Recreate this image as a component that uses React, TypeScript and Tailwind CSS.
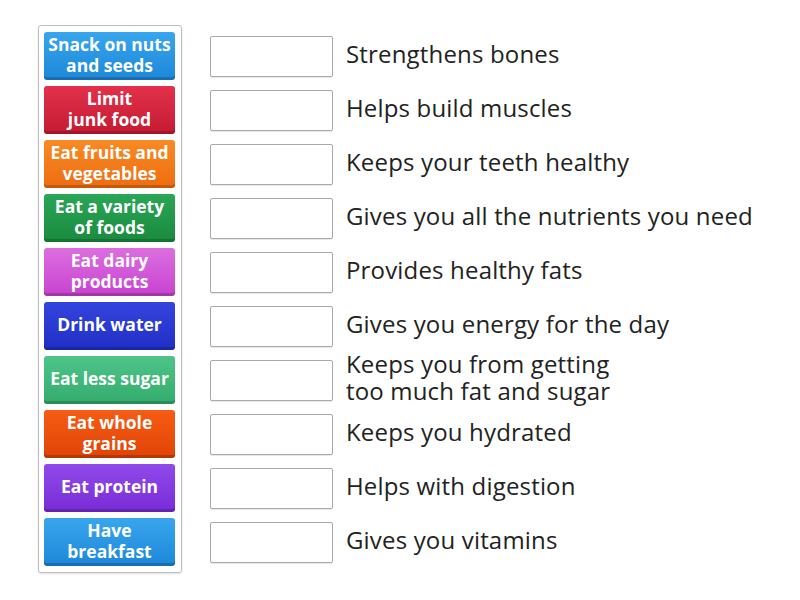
import React from "react";

const items: { label: string[]; cls: string }[] = [
  { label: ["Snack on nuts", "and seeds"], cls: "from-[#38a6ee] to-[#1c87d8]" },
  { label: ["Limit", "junk food"], cls: "from-[#e3304b] to-[#c51a32]" },
  { label: ["Eat fruits and", "vegetables"], cls: "from-[#f88a24] to-[#ee6c0e]" },
  { label: ["Eat a variety", "of foods"], cls: "from-[#2aa656] to-[#198a3e]" },
  { label: ["Eat dairy", "products"], cls: "from-[#dc6ee0] to-[#c741cf]" },
  { label: ["Drink water"], cls: "from-[#3444de] to-[#1f2fc6]" },
  { label: ["Eat less sugar"], cls: "from-[#4ec588] to-[#33ac6e]" },
  { label: ["Eat whole", "grains"], cls: "from-[#f75c14] to-[#e04306]" },
  { label: ["Eat protein"], cls: "from-[#9249ea] to-[#772bd6]" },
  { label: ["Have", "breakfast"], cls: "from-[#38a6ee] to-[#1c87d8]" },
];

const answers: string[][] = [
  ["Strengthens bones"],
  ["Helps build muscles"],
  ["Keeps your teeth healthy"],
  ["Gives you all the nutrients you need"],
  ["Provides healthy fats"],
  ["Gives you energy for the day"],
  ["Keeps you from getting", "too much fat and sugar"],
  ["Keeps you hydrated"],
  ["Helps with digestion"],
  ["Gives you vitamins"],
];

export default function App() {
  return (
    <div
      className="w-[800px] h-[600px] bg-white flex items-start pl-[38px] pt-[25px]"
      style={{ fontFamily: '"Open Sans", "Noto Sans", sans-serif' }}
    >
      <div className="border border-[#bdbdbd] rounded-[3px] pl-[5px] pr-[6px] pt-[6px] pb-[6px] flex flex-col gap-[6px] shadow-[0_1px_2px_rgba(0,0,0,0.12)]">
        {items.map((it, i) => (
          <div
            key={i}
            className={`w-[131px] h-[48px] rounded-[3px] bg-linear-to-b ${it.cls} shadow-[inset_0_-3px_0_rgba(0,0,0,0.18)] flex flex-col items-center justify-center text-white font-bold text-[17.5px] leading-[21px] pb-[3px]`}
          >
            {it.label.map((l, j) => (
              <span key={j} className="whitespace-nowrap">{l}</span>
            ))}
          </div>
        ))}
      </div>
      <div className="ml-[28px] pt-[7px] flex flex-col gap-[6px]">
        {answers.map((a, i) => (
          <div key={i} className="h-[48px] flex items-center">
            <div className="w-[123px] h-[41px] border border-[#aaaaaa] rounded-[2px] bg-white shadow-[0_1px_1px_rgba(0,0,0,0.1)]" />
            <div className="ml-[13px] text-[24px] tracking-[0.17px] leading-[27px] text-[#222222] pb-[6px] whitespace-nowrap">
              {a.map((l, j) => (
                <div key={j}>{l}</div>
              ))}
            </div>
          </div>
        ))}
      </div>
    </div>
  );
}
